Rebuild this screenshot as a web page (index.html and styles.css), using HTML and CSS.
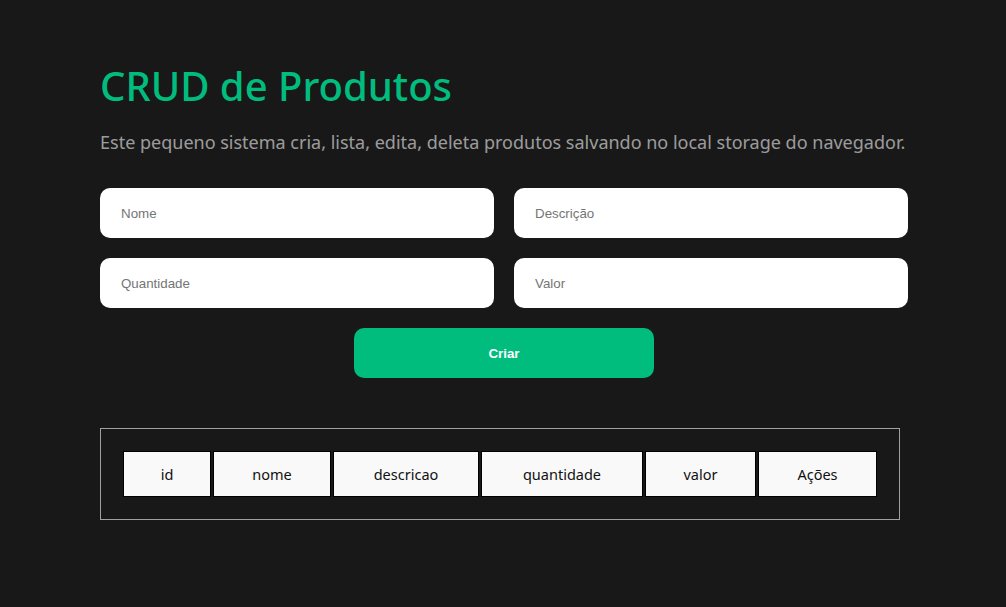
FILE: index.html
```html
<!DOCTYPE html>
<html lang="pt-BR">
<head>
<meta charset="utf-8">
<title>CRUD de Produtos</title>
<link rel="stylesheet" href="styles.css">
</head>
<body>
<main class="app">
  <h1 class="title">CRUD de Produtos</h1>
  <p class="lead">Este pequeno sistema cria, lista, edita, deleta produtos salvando no local storage do navegador.</p>
  <form class="form">
    <div class="grid">
      <input class="field" type="text" placeholder="Nome">
      <input class="field" type="text" placeholder="Descrição">
      <input class="field" type="text" placeholder="Quantidade">
      <input class="field" type="text" placeholder="Valor">
    </div>
    <button class="btn" type="button">Criar</button>
  </form>
  <section class="table-wrap">
    <table class="table">
      <thead>
        <tr>
          <th class="c-id">id</th>
          <th class="c-nome">nome</th>
          <th class="c-desc">descricao</th>
          <th class="c-qtd">quantidade</th>
          <th class="c-valor">valor</th>
          <th class="c-acoes">Ações</th>
        </tr>
      </thead>
    </table>
  </section>
</main>
</body>
</html>
```
FILE: styles.css
```css
html, body {
  margin: 0;
  padding: 0;
  background: #181818;
}
body {
  font-family: "Noto Sans", sans-serif;
  color: rgba(235, 235, 235, 0.64);
}
.app {
  width: 808px;
  padding: 58px 0 0 100px;
}
.title {
  margin: 0;
  font-size: 40px;
  font-weight: 500;
  line-height: 56px;
  color: #00bd7e;
}
.lead {
  margin: 14px 0 0;
  font-size: 18px;
  line-height: 28px;
  white-space: nowrap;
}
.form {
  margin-top: 32px;
  display: flex;
  flex-direction: column;
  align-items: center;
  gap: 20px;
}
.grid {
  width: 808px;
  display: grid;
  grid-template-columns: 394px 394px;
  gap: 20px;
}
.field {
  box-sizing: border-box;
  height: 50px;
  border: none;
  border-radius: 10px;
  background: #fff;
  padding: 0 21px;
  font-family: "Liberation Sans", Arial, sans-serif;
  font-size: 13.33px;
  color: #000;
  outline: none;
}
.field::placeholder {
  color: #757575;
}
.btn {
  width: 300px;
  height: 50px;
  border: none;
  border-radius: 10px;
  background: #00bd7e;
  color: #fff;
  font-family: "Liberation Sans", Arial, sans-serif;
  font-size: 13.33px;
  font-weight: 600;
}
.table-wrap {
  box-sizing: border-box;
  width: 800px;
  margin-top: 50px;
  border: 1px solid #a0a0a0;
  padding: 20px;
}
.table {
  width: 100%;
  border-spacing: 2px;
  table-layout: fixed;
}
.table th {
  box-sizing: border-box;
  height: 46px;
  border: 1px solid #000;
  background: #f9f9f9;
  color: #111;
  font-weight: 400;
  font-size: 14.5px;
  padding: 0;
}
.c-id { width: 88px; }
.c-nome { width: 118px; }
.c-desc { width: 146px; }
.c-qtd { width: 162px; }
.c-valor { width: 111px; }
.c-acoes { width: 119px; }
```
